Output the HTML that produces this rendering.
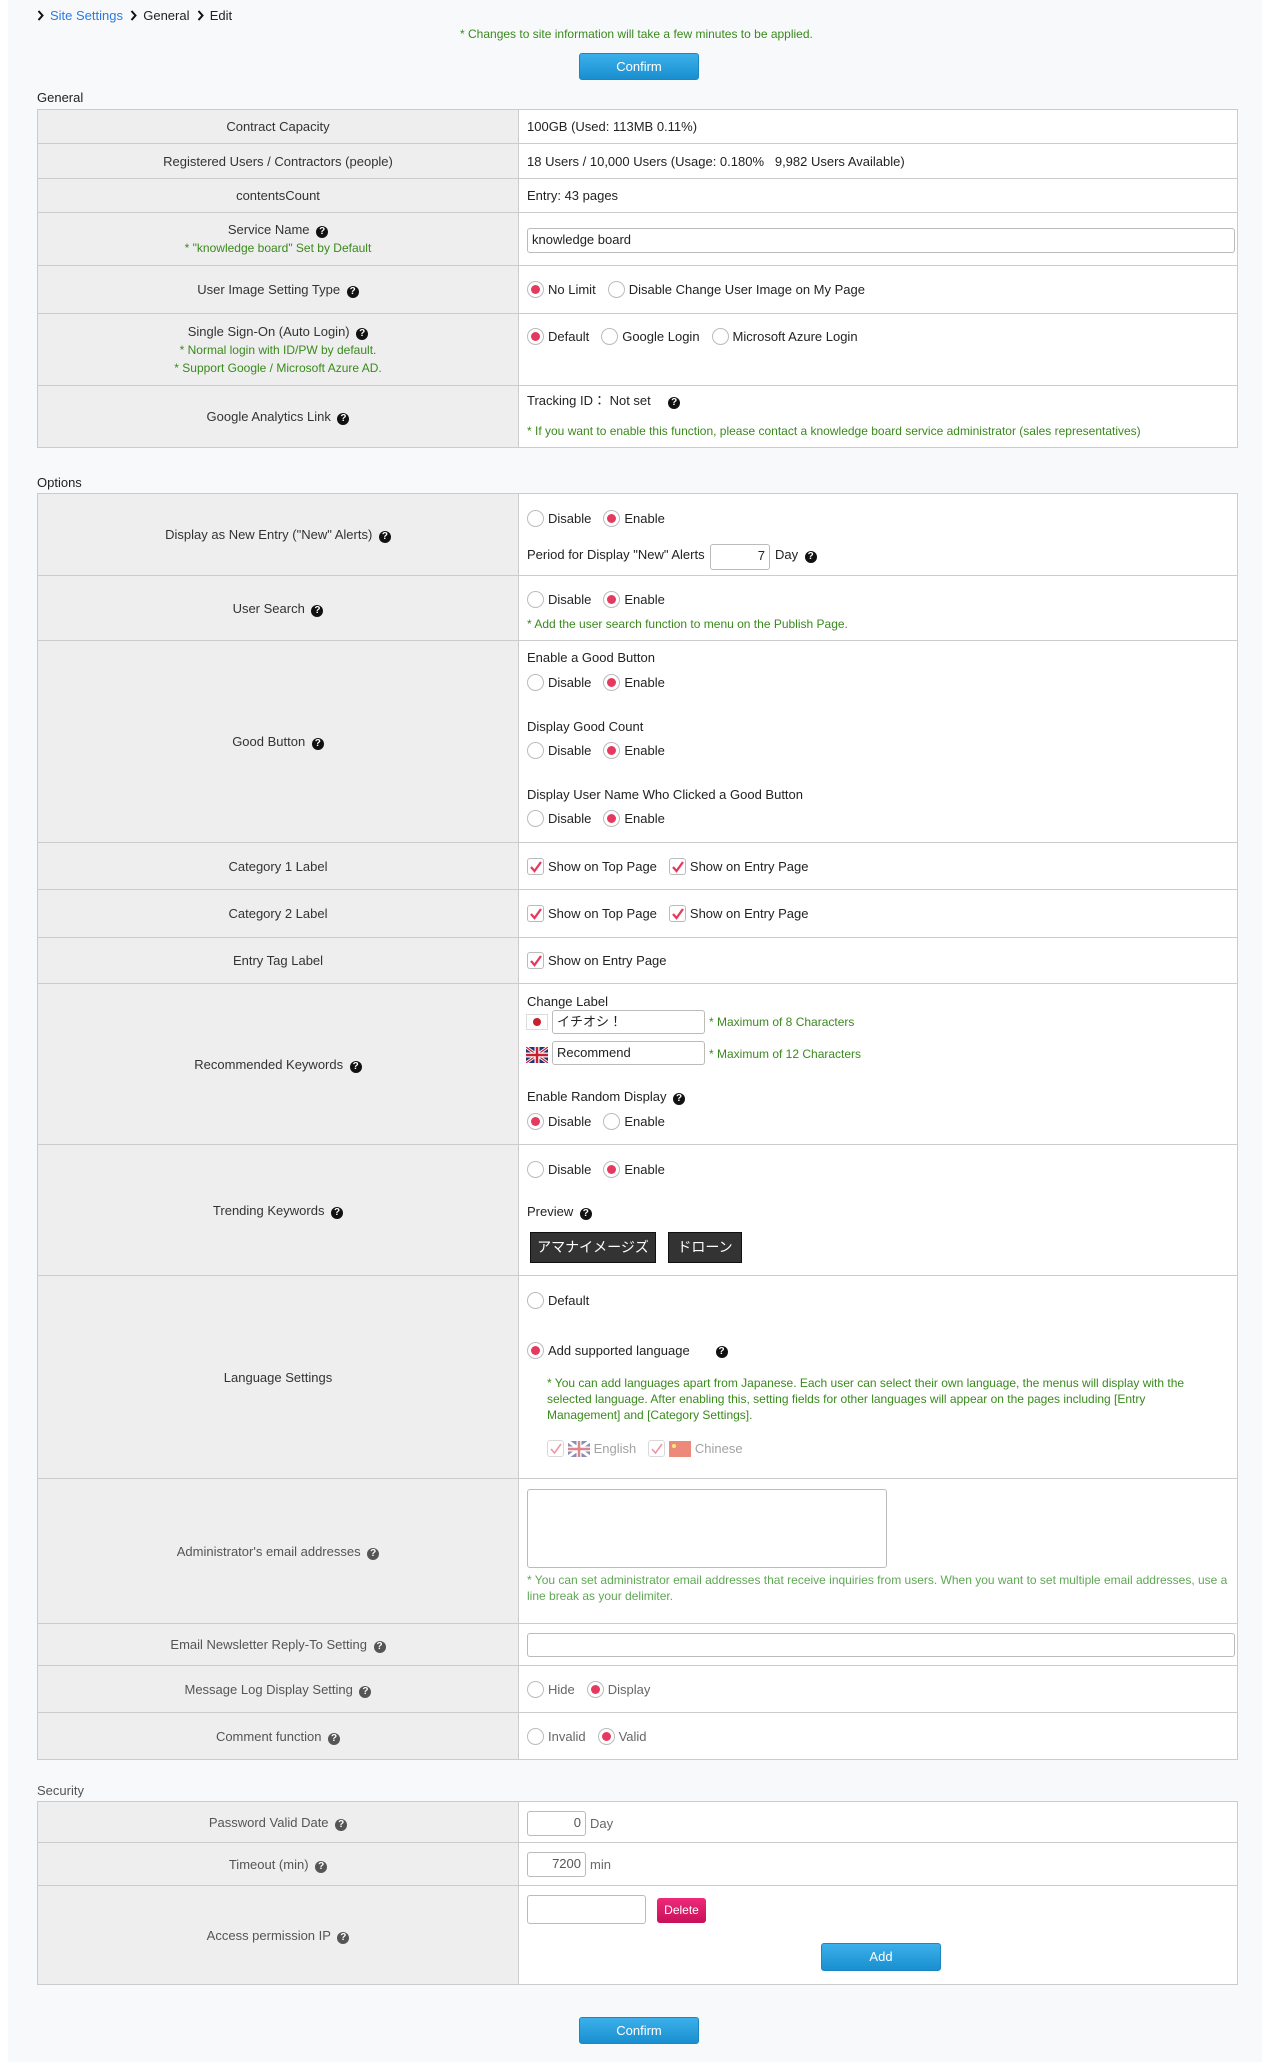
<!DOCTYPE html>
<html><head><meta charset="utf-8"><style>
*{box-sizing:border-box;margin:0;padding:0}
body{width:1272px;height:2072px;background:#fff;font-family:"Liberation Sans","Noto Sans CJK JP",sans-serif;font-size:13px;color:#222;position:relative;overflow:hidden}
#bg{position:absolute;left:8px;top:0;width:1254px;height:2062px;background:#f8f9fb}
.abs{position:absolute;white-space:nowrap;line-height:16px}
.row{position:absolute;left:37px;width:1201px;border:1px solid #ccc;border-top:none}
.first{border-top:1px solid #ccc}
.lab{position:absolute;left:0;top:0;bottom:0;width:481px;background:#eee;border-right:1px solid #ccc;display:flex;flex-direction:column;align-items:center;justify-content:center;text-align:center;line-height:19px;color:#333}
.val{position:absolute;left:481px;right:0;top:0;bottom:0;background:#fff}
.c{display:flex;align-items:center;padding-left:8px}
.g{color:#3a8a1c;font-size:12px}
.q{display:inline-block;width:12px;height:12px;border-radius:50%;background:#111;color:#fff;font-size:10px;line-height:12px;text-align:center;font-weight:bold;vertical-align:0px;margin-left:3px}
.r{display:inline-block;width:17px;height:17px;border:1px solid #bbb;border-radius:50%;vertical-align:middle;margin-right:4px;position:relative;background:#fff}
.r.on::after{content:"";position:absolute;left:3px;top:3px;width:9px;height:9px;border-radius:50%;background:#e6395f}
.rl{margin-right:12px;vertical-align:middle}
.cb{display:inline-block;width:17px;height:17px;border:1px solid #bbb;border-radius:3px;vertical-align:middle;margin-right:4px;position:relative;background:#fff}
.cb svg{position:absolute;left:1px;top:1px}
.inp{position:absolute;border:1px solid #bbb;border-radius:3px;background:#fff;padding:0 4px;line-height:22px}
.btn{position:absolute;background:linear-gradient(#3bb0ea,#1a8fd0);color:#fff;border-radius:3px;text-align:center;line-height:26px;border:1px solid #1a86c4}
.fade{opacity:.55}
.chev{display:inline-block;vertical-align:-1px;margin-right:6px}
</style></head><body>
<div id="bg"></div>

<div class="abs" style="left:37px;top:8px;"><svg class="chev" width="7" height="11"><path d="M1.5 1l4 4.5-4 4.5" stroke="#111" stroke-width="2" fill="none"/></svg><span style="color:#2a7ae2">Site Settings</span> &nbsp;<svg class="chev" width="7" height="11"><path d="M1.5 1l4 4.5-4 4.5" stroke="#111" stroke-width="2" fill="none"/></svg>General &nbsp;<svg class="chev" width="7" height="11"><path d="M1.5 1l4 4.5-4 4.5" stroke="#111" stroke-width="2" fill="none"/></svg>Edit</div>
<div class="abs g" style="left:460px;top:26px">* Changes to site information will take a few minutes to be applied.</div>
<div class="btn" style="left:579px;top:53px;width:120px;height:27px">Confirm</div>
<div class="abs" style="left:37px;top:90px">General</div>

<div class="row first" style="top:109px;height:35px"><div class="lab">Contract Capacity</div><div class="val c">100GB (Used: 113MB 0.11%)</div></div>
<div class="row" style="top:144px;height:35px"><div class="lab">Registered Users / Contractors (people)</div><div class="val c">18 Users / 10,000 Users (Usage: 0.180% &nbsp; 9,982 Users Available)</div></div>
<div class="row" style="top:179px;height:34px"><div class="lab">contentsCount</div><div class="val c">Entry: 43 pages</div></div>
<div class="row" style="top:213px;height:53px"><div class="lab"><div>Service Name <span class="q">?</span></div><div class="g">* "knowledge board" Set by Default</div></div><div class="val"><div class="inp" style="left:8px;top:15px;width:708px;height:25px">knowledge board</div></div></div>
<div class="row" style="top:266px;height:48px"><div class="lab"><div>User Image Setting Type <span class="q">?</span></div></div><div class="val c"><span class="r on"></span><span class="rl">No Limit</span><span class="r"></span><span class="rl">Disable Change User Image on My Page</span></div></div>
<div class="row" style="top:314px;height:72px"><div class="lab"><div>Single Sign-On (Auto Login) <span class="q">?</span></div><div class="g" style="line-height:18px">* Normal login with ID/PW by default.</div><div class="g" style="line-height:18px">* Support Google / Microsoft Azure AD.</div></div><div class="val"><div class="abs" style="left:8px;top:14px"><span class="r on"></span><span class="rl">Default</span><span class="r"></span><span class="rl">Google Login</span><span class="r"></span><span class="rl">Microsoft Azure Login</span></div></div></div>
<div class="row" style="top:386px;height:62px"><div class="lab"><div>Google Analytics Link <span class="q">?</span></div></div><div class="val"><div class="abs" style="left:8px;top:7px">Tracking ID： Not set &nbsp;&nbsp;&nbsp;<span class="q">?</span></div><div class="abs g" style="left:8px;top:37px">* If you want to enable this function, please contact a knowledge board service administrator (sales representatives)</div></div></div>

<div class="abs" style="left:37px;top:475px">Options</div>
<div class="row first" style="top:493px;height:83px"><div class="lab"><div>Display as New Entry ("New" Alerts) <span class="q">?</span></div></div><div class="val">
<div class="abs" style="left:8px;top:16px"><span class="r"></span><span class="rl">Disable</span><span class="r on"></span><span class="rl">Enable</span></div>
<div class="abs" style="left:8px;top:53px">Period for Display "New" Alerts</div>
<div class="inp" style="left:191px;top:50px;width:60px;height:26px;text-align:right">7</div>
<div class="abs" style="left:256px;top:53px">Day <span class="q">?</span></div></div></div>
<div class="row" style="top:576px;height:65px"><div class="lab"><div>User Search <span class="q">?</span></div></div><div class="val">
<div class="abs" style="left:8px;top:15px"><span class="r"></span><span class="rl">Disable</span><span class="r on"></span><span class="rl">Enable</span></div>
<div class="abs g" style="left:8px;top:40px">* Add the user search function to menu on the Publish Page.</div></div></div>
<div class="row" style="top:641px;height:202px"><div class="lab"><div>Good Button <span class="q">?</span></div></div><div class="val">
<div class="abs" style="left:8px;top:9px">Enable a Good Button</div>
<div class="abs" style="left:8px;top:33px"><span class="r"></span><span class="rl">Disable</span><span class="r on"></span><span class="rl">Enable</span></div>
<div class="abs" style="left:8px;top:78px">Display Good Count</div>
<div class="abs" style="left:8px;top:101px"><span class="r"></span><span class="rl">Disable</span><span class="r on"></span><span class="rl">Enable</span></div>
<div class="abs" style="left:8px;top:146px">Display User Name Who Clicked a Good Button</div>
<div class="abs" style="left:8px;top:169px"><span class="r"></span><span class="rl">Disable</span><span class="r on"></span><span class="rl">Enable</span></div></div></div>
<div class="row" style="top:843px;height:47px"><div class="lab">Category 1 Label</div><div class="val c"><span class="cb"><svg width="14" height="14"><path d="M2 7l3.5 4L12 2" stroke="#e6395f" stroke-width="2.3" fill="none"/></svg></span><span class="rl">Show on Top Page</span><span class="cb"><svg width="14" height="14"><path d="M2 7l3.5 4L12 2" stroke="#e6395f" stroke-width="2.3" fill="none"/></svg></span><span class="rl">Show on Entry Page</span></div></div>
<div class="row" style="top:890px;height:48px"><div class="lab">Category 2 Label</div><div class="val c"><span class="cb"><svg width="14" height="14"><path d="M2 7l3.5 4L12 2" stroke="#e6395f" stroke-width="2.3" fill="none"/></svg></span><span class="rl">Show on Top Page</span><span class="cb"><svg width="14" height="14"><path d="M2 7l3.5 4L12 2" stroke="#e6395f" stroke-width="2.3" fill="none"/></svg></span><span class="rl">Show on Entry Page</span></div></div>
<div class="row" style="top:938px;height:46px"><div class="lab">Entry Tag Label</div><div class="val c"><span class="cb"><svg width="14" height="14"><path d="M2 7l3.5 4L12 2" stroke="#e6395f" stroke-width="2.3" fill="none"/></svg></span><span class="rl">Show on Entry Page</span></div></div>
<div class="row" style="top:984px;height:161px"><div class="lab"><div>Recommended Keywords <span class="q">?</span></div></div><div class="val">
<div class="abs" style="left:8px;top:10px">Change Label</div>
<div style="position:absolute;left:7px;top:30px;width:22px;height:16px;border:1px solid #ddd;background:#fff"><div style="position:absolute;left:6px;top:3px;width:8px;height:8px;border-radius:50%;background:#c8202f"></div></div>
<div class="inp" style="left:33px;top:26px;width:153px;height:24px">イチオシ！</div>
<div class="abs g" style="left:190px;top:30px">* Maximum of 8 Characters</div>
<svg style="position:absolute;left:7px;top:63px" width="22" height="16"><rect width="22" height="16" fill="#23337a"/><path d="M0 0L22 16M22 0L0 16" stroke="#fff" stroke-width="3"/><path d="M0 0L22 16M22 0L0 16" stroke="#c8202f" stroke-width="1.2"/><path d="M11 0V16M0 8H22" stroke="#fff" stroke-width="5"/><path d="M11 0V16M0 8H22" stroke="#c8202f" stroke-width="2.5"/></svg>
<div class="inp" style="left:33px;top:57px;width:153px;height:24px">Recommend</div>
<div class="abs g" style="left:190px;top:62px">* Maximum of 12 Characters</div>
<div class="abs" style="left:8px;top:105px">Enable Random Display <span class="q">?</span></div>
<div class="abs" style="left:8px;top:129px"><span class="r on"></span><span class="rl">Disable</span><span class="r"></span><span class="rl">Enable</span></div></div></div>
<div class="row" style="top:1145px;height:131px"><div class="lab"><div>Trending Keywords <span class="q">?</span></div></div><div class="val">
<div class="abs" style="left:8px;top:16px"><span class="r"></span><span class="rl">Disable</span><span class="r on"></span><span class="rl">Enable</span></div>
<div class="abs" style="left:8px;top:59px">Preview <span class="q">?</span></div>
<div class="abs" style="left:11px;top:87px;width:126px;height:31px;background:#333;border:1px solid #111;color:#fff;line-height:29px;text-align:center;font-size:14px">アマナイメージズ</div>
<div class="abs" style="left:149px;top:87px;width:74px;height:31px;background:#333;border:1px solid #111;color:#fff;line-height:29px;text-align:center;font-size:14px">ドローン</div></div></div>
<div class="row" style="top:1276px;height:203px"><div class="lab"><div>Language Settings</div></div><div class="val">
<div class="abs" style="left:8px;top:16px"><span class="r"></span><span class="rl">Default</span></div>
<div class="abs" style="left:8px;top:66px"><span class="r on"></span><span class="rl">Add supported language</span>&nbsp;&nbsp;&nbsp;<span class="q">?</span></div>
<div class="g" style="position:absolute;left:28px;top:99px;width:660px;line-height:16px">* You can add languages apart from Japanese. Each user can select their own language, the menus will display with the selected language. After enabling this, setting fields for other languages will appear on the pages including [Entry Management] and [Category Settings].</div>
<div class="abs fade" style="left:28px;top:164px;color:#555"><span class="cb"><svg width="14" height="14"><path d="M2 7l3.5 4L12 2" stroke="#e6395f" stroke-width="1.5" fill="none"/></svg></span><svg width="22" height="16" style="vertical-align:middle"><rect width="22" height="16" fill="#23337a"/><path d="M0 0L22 16M22 0L0 16" stroke="#fff" stroke-width="3"/><path d="M11 0V16M0 8H22" stroke="#fff" stroke-width="5"/><path d="M11 0V16M0 8H22" stroke="#c8202f" stroke-width="2.5"/></svg> <span class="rl">English</span><span class="cb"><svg width="14" height="14"><path d="M2 7l3.5 4L12 2" stroke="#e6395f" stroke-width="1.5" fill="none"/></svg></span><svg width="22" height="16" style="vertical-align:middle"><rect width="22" height="16" fill="#de2910"/><circle cx="5" cy="5" r="2" fill="#ffde00"/></svg> <span class="rl">Chinese</span></div></div></div>
<div class="row" style="top:1479px;height:145px"><div class="lab" style="color:#555"><div>Administrator's email addresses <span class="q" style="background:#555">?</span></div></div><div class="val">
<div class="inp" style="left:8px;top:10px;width:360px;height:79px"></div>
<div class="g fade" style="position:absolute;left:8px;top:93px;width:710px;line-height:16px;color:#2a8a1c;opacity:.75">* You can set administrator email addresses that receive inquiries from users. When you want to set multiple email addresses, use a line break as your delimiter.</div></div></div>
<div class="row" style="top:1624px;height:42px"><div class="lab" style="color:#555"><div>Email Newsletter Reply-To Setting <span class="q" style="background:#555">?</span></div></div><div class="val"><div class="inp" style="left:8px;top:9px;width:708px;height:24px"></div></div></div>
<div class="row" style="top:1666px;height:47px"><div class="lab" style="color:#555"><div>Message Log Display Setting <span class="q" style="background:#555">?</span></div></div><div class="val c" style="color:#666"><span class="r"></span><span class="rl">Hide</span><span class="r on"></span><span class="rl">Display</span></div></div>
<div class="row" style="top:1713px;height:47px"><div class="lab" style="color:#555"><div>Comment function <span class="q" style="background:#555">?</span></div></div><div class="val c" style="color:#666"><span class="r"></span><span class="rl">Invalid</span><span class="r on"></span><span class="rl">Valid</span></div></div>

<div class="abs" style="left:37px;top:1783px;color:#555">Security</div>
<div class="row first" style="top:1801px;height:42px"><div class="lab" style="color:#555"><div>Password Valid Date <span class="q" style="background:#555">?</span></div></div><div class="val"><div class="inp" style="left:8px;top:9px;width:59px;height:25px;text-align:right;color:#555">0</div><div class="abs" style="left:71px;top:14px;color:#666">Day</div></div></div>
<div class="row" style="top:1843px;height:43px"><div class="lab" style="color:#555"><div>Timeout (min) <span class="q" style="background:#555">?</span></div></div><div class="val"><div class="inp" style="left:8px;top:9px;width:59px;height:25px;text-align:right;color:#555">7200</div><div class="abs" style="left:71px;top:14px;color:#666">min</div></div></div>
<div class="row" style="top:1886px;height:99px"><div class="lab" style="color:#555"><div>Access permission IP <span class="q" style="background:#555">?</span></div></div><div class="val">
<div class="inp" style="left:8px;top:9px;width:119px;height:29px"></div>
<div class="abs" style="left:138px;top:12px;width:49px;height:25px;background:linear-gradient(#ee2a7a,#c8105a);color:#fff;border-radius:3px;text-align:center;line-height:25px;font-size:12px">Delete</div>
<div class="btn" style="left:302px;top:57px;width:120px;height:28px">Add</div></div></div>

<div class="btn" style="left:579px;top:2017px;width:120px;height:27px">Confirm</div>
</body></html>
